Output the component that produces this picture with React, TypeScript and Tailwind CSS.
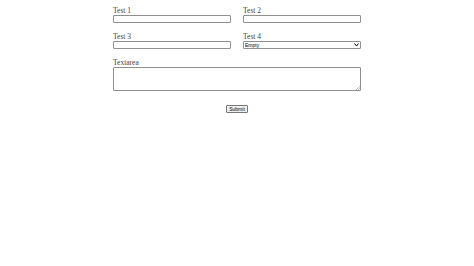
import React from 'react';

const App: React.FC = () => {
  return (
    <div className="w-[474px] h-[266px] bg-white font-['Liberation_Serif',serif] text-[#444]">
      <form className="w-[248px] mx-auto pt-[7px]" onSubmit={(e) => e.preventDefault()}>
        <div className="grid grid-cols-2 gap-x-[12px] gap-y-[10px]">
          <label className="flex flex-col text-[7.5px] leading-[8px] font-normal">
            <span className="h-[8px]">Test 1</span>
            <input type="text" className="h-[8px] border border-[#8f8f8f] rounded-[1px] bg-white" />
          </label>
          <label className="flex flex-col text-[7.5px] leading-[8px] font-normal">
            <span className="h-[8px]">Test 2</span>
            <input type="text" className="h-[8px] border border-[#8f8f8f] rounded-[1px] bg-white" />
          </label>
          <label className="flex flex-col text-[7.5px] leading-[8px] font-normal">
            <span className="h-[8px]">Test 3</span>
            <input type="text" className="h-[8px] border border-[#8f8f8f] rounded-[1px] bg-white" />
          </label>
          <label className="flex flex-col text-[7.5px] leading-[8px] font-normal">
            <span className="h-[8px]">Test 4</span>
            <div className="h-[8px] border border-[#8f8f8f] rounded-[1px] bg-white flex items-center justify-between px-[1px] font-['Liberation_Sans',sans-serif] text-[5px] text-black">
              <span>Empty</span>
              <svg width="5" height="4" viewBox="0 0 10 8">
                <path d="M1 1l4 5 4-5" fill="none" stroke="#000" strokeWidth="2" />
              </svg>
            </div>
          </label>
        </div>
        <label className="flex flex-col text-[7.5px] leading-[8px] font-normal mt-[10px]">
          <span className="h-[8px]">Textarea</span>
          <div className="relative h-[24px] border border-[#8f8f8f] rounded-[1px] bg-white">
            <svg className="absolute right-0 bottom-0" width="4" height="4" viewBox="0 0 4 4">
              <path d="M0 4L4 0M2 4L4 2" stroke="#999" strokeWidth="0.6" />
            </svg>
          </div>
        </label>
        <div className="flex justify-center mt-[14px]">
          <button
            type="submit"
            className="h-[8px] px-[2px] border border-[#767676] rounded-[1px] bg-[#efefef] font-['Liberation_Sans',sans-serif] text-[5px] leading-[6px] text-black"
          >
            Submit
          </button>
        </div>
      </form>
    </div>
  );
};

export default App;
